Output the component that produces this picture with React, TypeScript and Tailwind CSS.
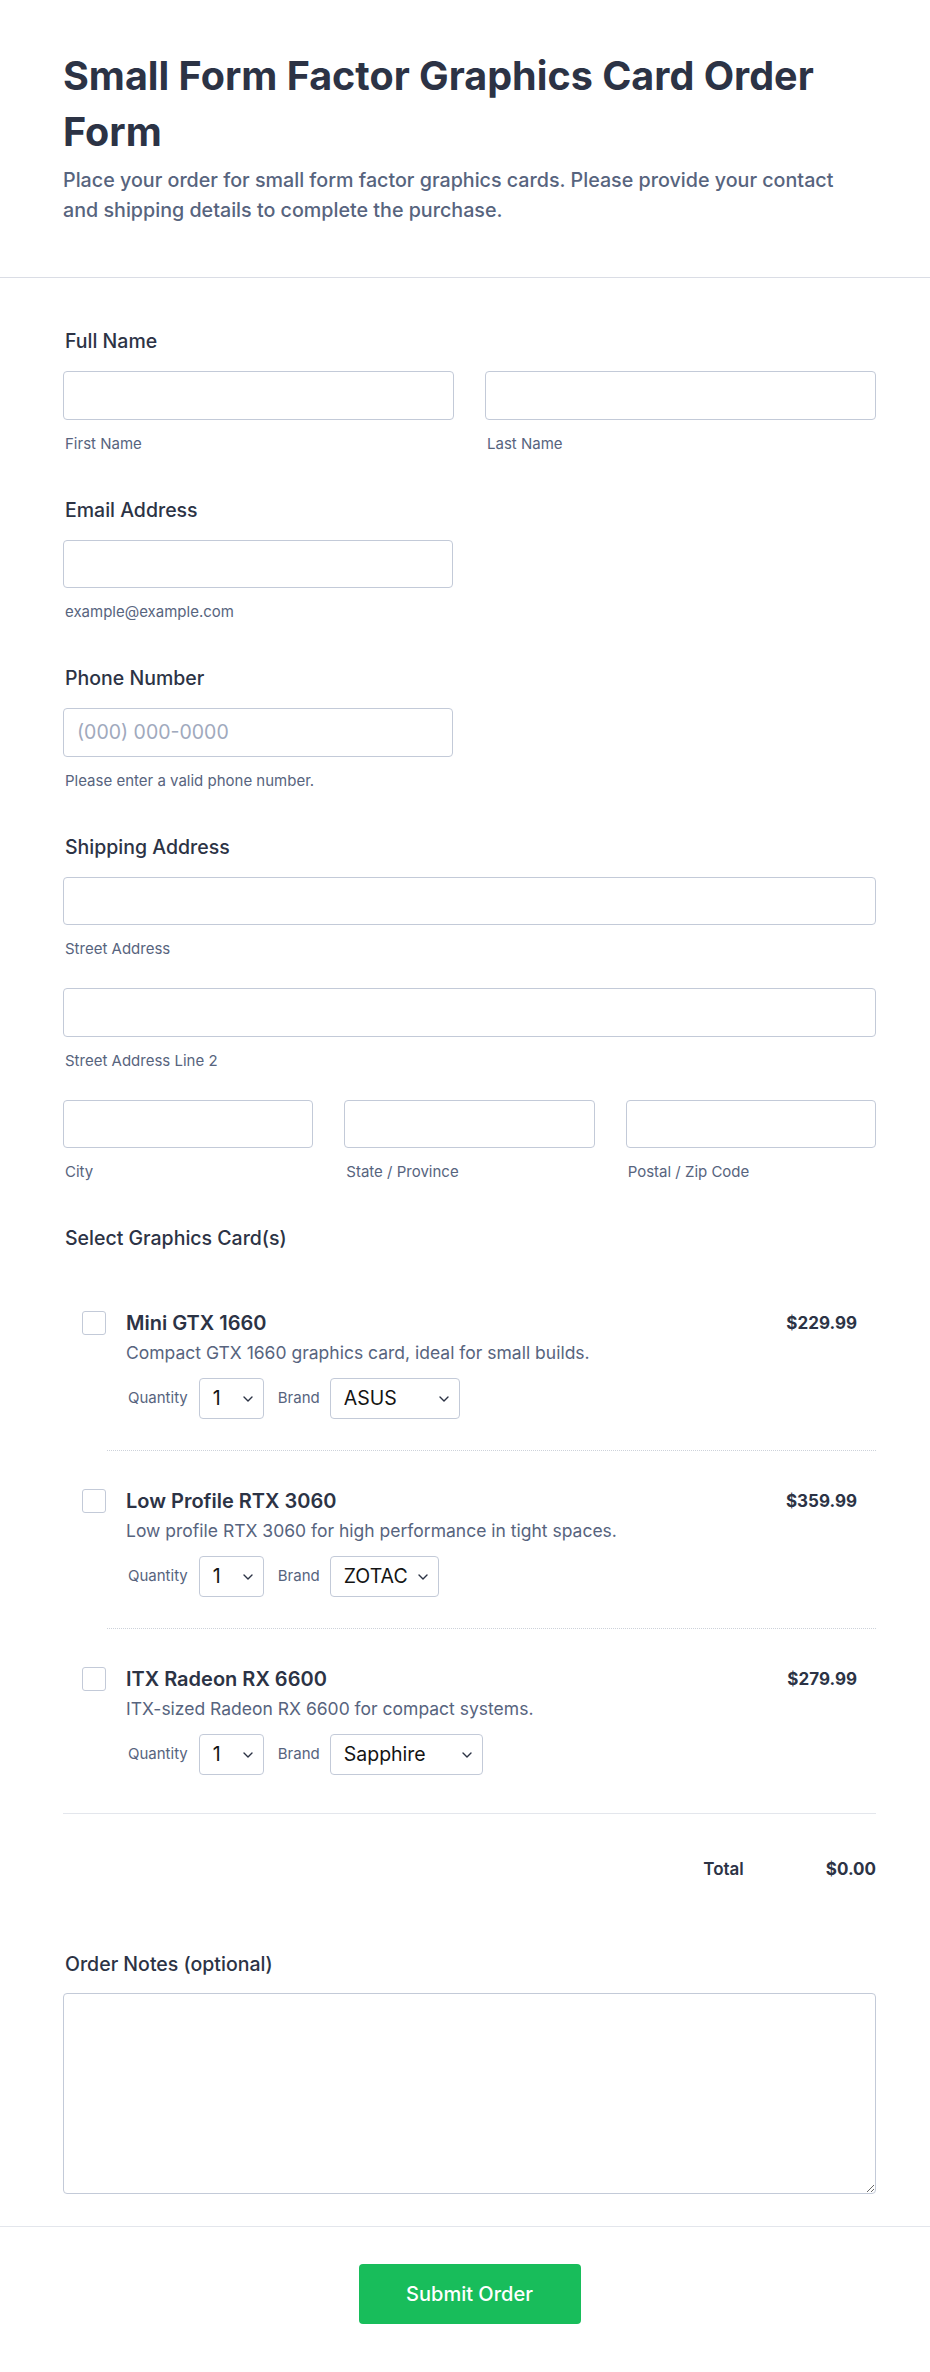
import React from "react";

type Card = {
  name: string;
  desc: string;
  price: string;
  brand: string;
  brands: string[];
  brandWidth: string;
};

const cards: Card[] = [
  {
    name: "Mini GTX 1660",
    desc: "Compact GTX 1660 graphics card, ideal for small builds.",
    price: "$229.99",
    brand: "ASUS",
    brands: ["ASUS", "MSI", "Gigabyte"],
    brandWidth: "w-[130px]",
  },
  {
    name: "Low Profile RTX 3060",
    desc: "Low profile RTX 3060 for high performance in tight spaces.",
    price: "$359.99",
    brand: "ZOTAC",
    brands: ["ZOTAC", "MSI"],
    brandWidth: "w-[109px]",
  },
  {
    name: "ITX Radeon RX 6600",
    desc: "ITX-sized Radeon RX 6600 for compact systems.",
    price: "$279.99",
    brand: "Sapphire",
    brands: ["Sapphire", "XFX", "PowerColor"],
    brandWidth: "w-[153px]",
  },
];

function Chevron() {
  return (
    <svg
      className="pointer-events-none absolute right-[11px] top-1/2 -translate-y-1/2"
      width="10"
      height="6"
      viewBox="0 0 10 6"
      fill="none"
    >
      <path d="M1 1l4 4 4-4" stroke="#2c3345" strokeWidth="1.4" strokeLinecap="round" strokeLinejoin="round" />
    </svg>
  );
}

function Select({ value, options, width }: { value: string; options: string[]; width: string }) {
  return (
    <div className={`relative h-[41px] ${width}`}>
      <select
        defaultValue={value}
        className="h-full w-full appearance-none rounded-[4px] border border-[#c3cad8] bg-white pl-[13px] pr-[26px] text-[19.5px] text-[#141414] outline-none"
      >
        {options.map((o) => (
          <option key={o} value={o}>
            {o}
          </option>
        ))}
      </select>
      <Chevron />
    </div>
  );
}

function Label({ children }: { children: React.ReactNode }) {
  return <div className="pl-[2px] text-[19.5px] font-medium leading-[28px] text-[#2c3345]">{children}</div>;
}

function Sub({ children }: { children: React.ReactNode }) {
  return <div className="mt-[14px] pl-[2px] text-[15px] leading-[20px] text-[#57647e]">{children}</div>;
}

const inputCls =
  "block h-[48.5px] w-full rounded-[4px] border border-[#c3cad8] bg-white px-[13px] text-[19.5px] text-[#2c3345] outline-none placeholder:text-[#a0a9bd]";

export default function App() {
  return (
    <div className="min-h-screen bg-white font-['Inter',sans-serif] text-[#2c3345]">
      <header className="border-b border-[#dadde5] pb-[52px] pl-[63px] pr-[54px] pt-[48px]">
        <h1 className="text-[39.5px] font-bold leading-[56px] text-[#2c3345]">
          Small Form Factor Graphics Card Order Form
        </h1>
        <p className="mt-[5px] text-[19.7px] font-medium leading-[30px] text-[#57647e]">
          Place your order for small form factor graphics cards. Please provide your contact
          <br />
          and shipping details to complete the purchase.
        </p>
      </header>

      <form className="pb-[32px] pl-[63px] pr-[54px] pt-[49px]" onSubmit={(e) => e.preventDefault()}>
        <Label>Full Name</Label>
        <div className="mt-[16px] grid grid-cols-2 gap-x-[31px]">
          <div>
            <input className={inputCls} />
            <Sub>First Name</Sub>
          </div>
          <div>
            <input className={inputCls} />
            <Sub>Last Name</Sub>
          </div>
        </div>

        <div className="mt-[42px]">
          <Label>Email Address</Label>
          <div className="mt-[16px] w-[390px]">
            <input className={inputCls} type="email" />
            <Sub>example@example.com</Sub>
          </div>
        </div>

        <div className="mt-[42px]">
          <Label>Phone Number</Label>
          <div className="mt-[16px] w-[390px]">
            <input className={inputCls} placeholder="(000) 000-0000" />
            <Sub>Please enter a valid phone number.</Sub>
          </div>
        </div>

        <div className="mt-[42px]">
          <Label>Shipping Address</Label>
          <div className="mt-[16px]">
            <input className={inputCls} />
            <Sub>Street Address</Sub>
          </div>
          <div className="mt-[29px]">
            <input className={inputCls} />
            <Sub>Street Address Line 2</Sub>
          </div>
          <div className="mt-[29px] grid grid-cols-3 gap-x-[31px]">
            <div>
              <input className={inputCls} />
              <Sub>City</Sub>
            </div>
            <div>
              <input className={inputCls} />
              <Sub>State / Province</Sub>
            </div>
            <div>
              <input className={inputCls} />
              <Sub>Postal / Zip Code</Sub>
            </div>
          </div>
        </div>

        <div className="mt-[42px]">
          <Label>Select Graphics Card(s)</Label>
          <div className="mt-[21px]">
            {cards.map((c, i) => {
              const last = i === cards.length - 1;
              return (
                <div key={c.name}>
                  <div className={`flex items-start pl-[19px] pr-[19px] pt-[36px] ${last ? "pb-[38px]" : "pb-[31px]"}`}>
                    <input
                      type="checkbox"
                      className="mt-[2px] h-6 w-6 shrink-0 appearance-none rounded-[3px] border border-[#c3cad8] bg-white"
                    />
                    <div className="ml-[20px] flex-1">
                      <div className="flex items-start justify-between">
                        <div className="text-[20px] font-semibold leading-[28px] text-[#2c3345]">{c.name}</div>
                        <div className="text-[17px] font-bold leading-[28px] text-[#2c3345]">{c.price}</div>
                      </div>
                      <div className="mt-[4px] text-[17.5px] leading-[24px] text-[#57647e]">{c.desc}</div>
                      <div className="mt-[13px] flex items-center">
                        <span className="ml-[2px] text-[15px] text-[#57647e]">Quantity</span>
                        <div className="ml-[11px]">
                          <Select value="1" options={["1", "2", "3", "4", "5"]} width="w-[65px]" />
                        </div>
                        <span className="ml-[14px] text-[15px] text-[#57647e]">Brand</span>
                        <div className="ml-[10px]">
                          <Select value={c.brand} options={c.brands} width={c.brandWidth} />
                        </div>
                      </div>
                    </div>
                  </div>
                  {last ? (
                    <div className="border-t border-[#e3e6ec]" />
                  ) : (
                    <div className="ml-[44px] border-t border-dotted border-[#cdd2da]" />
                  )}
                </div>
              );
            })}
          </div>
          <div className="flex justify-end pt-[43px]">
            <span className="text-[17px] font-semibold leading-[24px] text-[#2c3345]">Total</span>
            <span className="ml-[82px] text-[17px] font-bold leading-[24px] text-[#2c3345]">$0.00</span>
          </div>
        </div>

        <div className="mt-[69px]">
          <Label>Order Notes (optional)</Label>
          <textarea className="mt-[15px] block h-[201px] w-full rounded-[4px] border border-[#c3cad8] bg-white px-[13px] py-[10px] text-[17px] outline-none" />
        </div>
      </form>

      <div className="flex justify-center border-t border-[#e3e6ec] pb-[49px] pl-[63px] pr-[54px] pt-[37px]">
        <button
          type="button"
          className="h-[60px] w-[222px] rounded-[4px] bg-[#18bd5b] text-[20px] font-medium text-white"
        >
          Submit Order
        </button>
      </div>
    </div>
  );
}
